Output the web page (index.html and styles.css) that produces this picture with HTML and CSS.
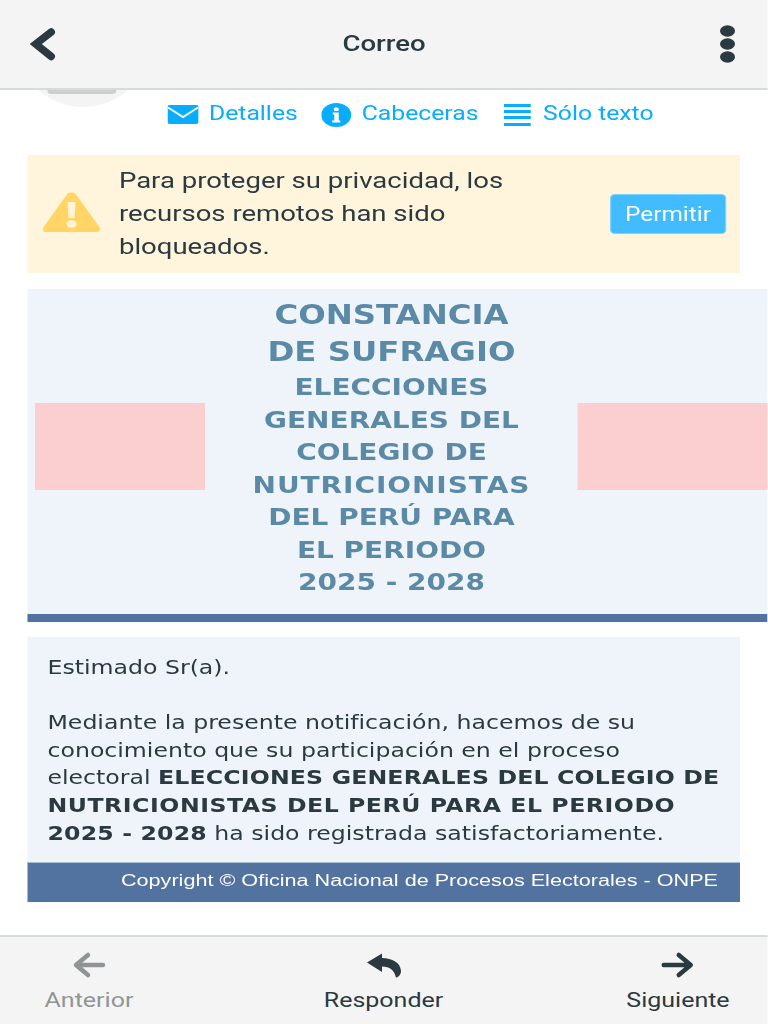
FILE: index.html
```html
<!DOCTYPE html>
<html lang="es">
<head>
<meta charset="utf-8">
<title>Correo</title>
<link rel="stylesheet" href="styles.css">
</head>
<body>
<div class="stage">
  <header class="topbar">
    <svg class="ic-back" viewBox="26 24 34 40" preserveAspectRatio="none"><path d="M51 32L35.500 44L51 56.500" fill="none" stroke="#2b3940" stroke-width="7.500" stroke-linecap="round" stroke-linejoin="miter"/></svg>
    <h1 class="title">Correo</h1>
    <svg class="ic-more" viewBox="718 22 20 44" preserveAspectRatio="none"><ellipse cx="728" cy="31" rx="7.500" ry="5.800"/><ellipse cx="728" cy="44" rx="7.500" ry="5.800"/><ellipse cx="728" cy="57" rx="7.500" ry="5.800"/></svg>
  </header>
  <main class="content">
    <div class="avatar"><div class="avatar-bar"></div></div>
    <nav class="links">
      <a class="link link-mail"><svg class="ic-mail" viewBox="168 106 31 19" preserveAspectRatio="none"><rect x="168" y="106" width="31" height="19" rx="2" fill="#08adff"/><path d="M168.500 108.500L183.500 118L198.500 108.500" fill="none" stroke="#fff" stroke-width="2"/></svg>Detalles</a>
      <a class="link link-info"><svg class="ic-info" viewBox="322 103 30 24" preserveAspectRatio="none"><ellipse cx="337" cy="115" rx="15" ry="12" fill="#08adff"/><rect x="334.500" y="107.500" width="5" height="3.500" rx="1.500" fill="#fff"/><path d="M333.500 112.500H339.500V120.500H341V122.500H333V120.500H335V114.500H333.500Z" fill="#fff"/></svg>Cabeceras</a>
      <a class="link link-text"><svg class="ic-lines" viewBox="504 105 27 22" preserveAspectRatio="none"><path d="M504 105h27v3h-27zM504 111h27v3h-27zM504 117h27v3h-27zM504 124h27v3h-27z" fill="#08adff"/></svg>Sólo texto</a>
    </nav>
    <section class="alert">
      <svg class="ic-warn" viewBox="42 192 58 40" preserveAspectRatio="none"><path d="M71 192.500Q68 192 66.500 194.500L43 227Q41 232 46 232H96Q101 232 99 227L75.500 194.500Q74 192 71 192.500Z" fill="#ffd666"/><path d="M67 202H75L74 218H68Z" fill="#fff4da"/><ellipse cx="71" cy="224" rx="5" ry="3.800" fill="#fff4da"/></svg>
      <p class="alert-text">Para proteger su privacidad, los<br>recursos remotos han sido<br>bloqueados.</p>
      <button class="allow">Permitir</button>
    </section>
    <section class="banner">
      <div class="blocked"></div>
      <div class="heading">
        <h2 class="heading-big">CONSTANCIA<br>DE SUFRAGIO</h2>
        <h3 class="heading-small">ELECCIONES<br>GENERALES DEL<br>COLEGIO DE<br><span class="heading-wide">NUTRICIONISTAS</span><br>DEL PERÚ PARA<br>EL PERIODO<br>2025 - 2028</h3>
      </div>
      <div class="blocked blocked-right"></div>
    </section>
    <section class="message">
      <p class="greet">Estimado Sr(a).</p>
      <p class="body-text">Mediante la presente notificación, hacemos de su<br>conocimiento que su participación en el proceso<br>electoral <strong>ELECCIONES GENERALES DEL COLEGIO DE<br><span class="bold-wide">NUTRICIONISTAS DEL PERÚ PARA EL PERIODO</span><br>2025 - 2028</strong> ha sido registrada satisfactoriamente.</p>
    </section>
    <div class="copyright">Copyright © Oficina Nacional de Procesos Electorales - ONPE</div>
  </main>
  <footer class="bottombar">
    <a class="nav-item nav-disabled"><svg class="ic-nav" viewBox="70 950 38 30" preserveAspectRatio="none"><path d="M103 965H77M88 955L76 965L88 975" fill="none" stroke="#8f9497" stroke-width="4.500" stroke-linecap="round" stroke-linejoin="round"/></svg><span>Anterior</span></a>
    <a class="nav-item"><svg class="ic-nav" viewBox="365 950 38 30" preserveAspectRatio="none"><path d="M382 953.500L367 962.500L382 972V966.500C390 966.500 394 970 396 977.500C398 977.500 401 975 401 971C401 963 392 958 382 958Z" fill="#2b3940"/></svg><span>Responder</span></a>
    <a class="nav-item"><svg class="ic-nav" viewBox="659 950 38 30" preserveAspectRatio="none"><path d="M664 965H690M679 955L691 965L679 975" fill="none" stroke="#2b3940" stroke-width="4.500" stroke-linecap="round" stroke-linejoin="round"/></svg><span>Siguiente</span></a>
  </footer>
</div>
</body>
</html>
```
FILE: styles.css
```css
html, body {
  margin: 0;
  padding: 0;
  width: 768px;
  height: 1024px;
  overflow: hidden;
  background: #fff;
}

/* The reference is a phone capture stretched sideways, so the whole page is widened 1.25x. */
.stage {
  width: 614.4px;
  height: 1024px;
  display: flex;
  flex-direction: column;
  transform: scaleX(1.25);
  transform-origin: 0 0;
  font-family: Roboto, sans-serif;
  color: #2b3940;
}

.topbar {
  flex: none;
  height: 88px;
  display: grid;
  grid-template-columns: 1fr auto 1fr;
  align-items: center;
  padding: 0 20.8px;
  background: #f4f4f4;
  border-bottom: 2px solid #d6dbde;
  position: relative;
  z-index: 1;
}

.ic-back { width: 27.2px; height: 40px; }
.ic-more { width: 16px; height: 44px; fill: #2b3940; justify-self: end; margin-right: 3.2px; }

.title {
  margin: 0 0 2px;
  font-size: 22px;
  font-weight: 500;
}

.content {
  flex: 1;
  position: relative;
  overflow: hidden;
}

.avatar {
  position: absolute;
  left: 12px;
  top: -119px;
  width: 109px;
  height: 136px;
  border-radius: 50%;
  background: #f4f4f4;
}

.avatar-bar {
  position: absolute;
  left: 26.4px;
  width: 54.4px;
  bottom: 13px;
  height: 4px;
  border-radius: 0 0 3px 3px;
  background: #cfcfcf;
}

.links {
  display: flex;
  align-items: center;
  height: 24px;
  margin: 11px 0 30px;
  padding-left: 134.4px;
  font-size: 19.800px;
  color: #08adff;
}

.link { display: flex; align-items: center; }
.link-mail { width: 123px; }
.link-info { width: 146px; }
.ic-mail { width: 24.8px; height: 19px; margin-right: 8px; margin-top: 3px; }
.ic-info { width: 24px; height: 24px; margin-right: 8px; margin-top: 3px; }
.ic-lines { width: 21.600px; height: 22px; margin-right: 9.500px; margin-top: 3px; }

.alert {
  width: 570.4px;
  height: 118px;
  box-sizing: border-box;
  margin-left: 21.6px;
  padding: 0 11.200px 0 12px;
  display: flex;
  align-items: center;
  background: #fff5dc;
}

.ic-warn { flex: none; width: 46.400px; height: 40px; margin-right: 15.200px; margin-top: -4px; }

.alert-text {
  flex: 1;
  margin: -2px 0 0;
  font-size: 22px;
  line-height: 33px;
}

.allow {
  width: 92.800px;
  height: 40px;
  padding: 0;
  margin-top: 0;
  font: 400 19.500px Roboto, sans-serif;
  color: #fff;
  background: #41bdff;
  border: 1px solid #7dd3ff;
  border-radius: 4px;
}

.banner {
  height: 333px;
  box-sizing: border-box;
  margin: 16px 0 15px 21.6px;
  padding-left: 6.400px;
  display: flex;
  align-items: flex-start;
  background: #eff4fb;
  border-bottom: 8px solid #5272a0;
  font-family: "DejaVu Sans", sans-serif;
  color: #5b8aa6;
}

.blocked {
  flex: none;
  width: 136px;
  height: 87px;
  margin-top: 114px;
  background: #fbcfcf;
}

.blocked-right { width: 152px; }

.heading {
  flex: none;
  width: 298.400px;
  text-align: center;
  font-weight: 700;
}

.heading-big {
  margin: 8px 0 0;
  font-size: 25.900px;
  line-height: 37px;
}

.heading-small {
  margin: 0;
  font-size: 22.400px;
  line-height: 32.500px;
}

.heading-wide { letter-spacing: 0.750px; }

.message {
  width: 570.4px;
  height: 225px;
  box-sizing: border-box;
  margin-left: 21.6px;
  padding: 16.500px 0 0 16.400px;
  background: #eff4fb;
  font-family: "DejaVu Sans", sans-serif;
  font-size: 18.900px;
  line-height: 27.800px;
}

.greet { margin: 0 0 27.500px; }
.body-text { margin: 0; white-space: nowrap; }
.body-text strong { letter-spacing: 0.120px; }
.bold-wide { letter-spacing: 0.420px; }

.copyright {
  width: 570.4px;
  height: 40px;
  box-sizing: border-box;
  margin-left: 21.6px;
  padding: 5px 17.600px 0 0;
  text-align: right;
  font-family: "Liberation Sans", sans-serif;
  font-size: 17.300px;
  line-height: 24px;
  color: #fff;
  background: #5272a0;
  border-top: 1px solid #a8bdd6;
}

.bottombar {
  flex: none;
  height: 89px;
  display: flex;
  justify-content: space-between;
  padding: 0 27px 0 26.200px;
  background: #f4f4f4;
  border-top: 2px solid #d6dbde;
  box-sizing: border-box;
  font-size: 20px;
}

.nav-item {
  width: 90px;
  display: flex;
  flex-direction: column;
  align-items: center;
  padding-top: 13px;
}

.nav-disabled { color: #8f9497; }
.ic-nav { width: 30.400px; height: 30px; margin-bottom: 8px; }
```
